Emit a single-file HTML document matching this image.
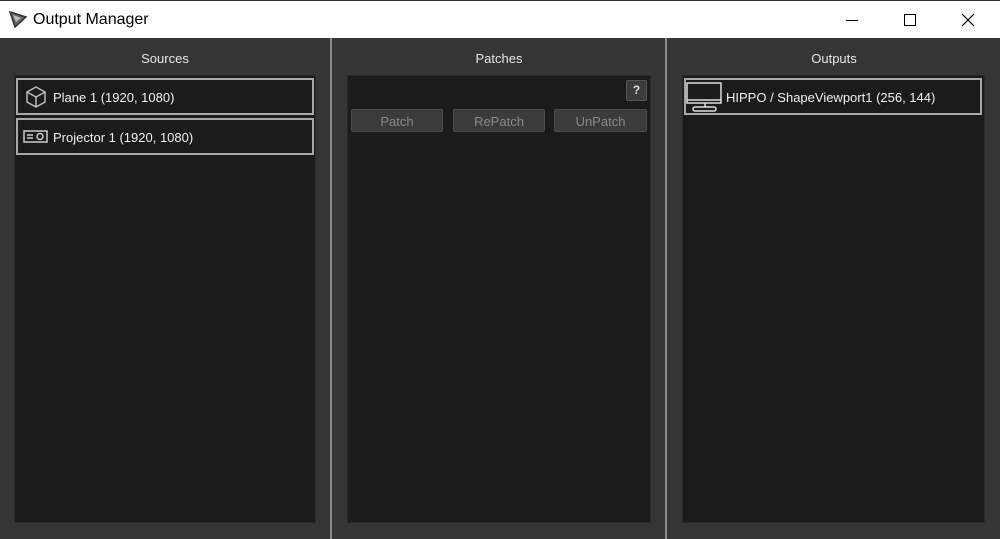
<!DOCTYPE html>
<html><head><style>
*{margin:0;padding:0;box-sizing:border-box}
body{width:1000px;height:539px;background:#353535;font-family:"Liberation Sans",sans-serif;position:relative;overflow:hidden}
.title{position:absolute;left:0;top:0;width:1000px;height:38px;background:#fff;border-top:1px solid #333}
.title span{position:absolute;left:33px;top:10px;font-size:16px;color:#000}
.sep{position:absolute;top:38px;width:2px;height:501px;background:#8a8a8a}
.hdr{position:absolute;top:51px;font-size:13px;color:#e6e6e6;text-align:center}
.list{position:absolute;top:75px;height:448px;background:#1b1b1b;border:1px solid #2a2a2a}
.item{position:absolute;height:37px;border:2px solid #a9a9a9;background:#1b1b1b;color:#f0f0f0;font-size:13px;line-height:35px}
.btn{position:absolute;top:109px;height:23px;background:#3b3b3b;border:1px solid #4a4a4a;border-radius:2px;color:#8a8a8a;font-size:13px;text-align:center;line-height:23px}
</style></head><body>
<div class="title">
<svg style="position:absolute;left:8px;top:9px" width="20" height="20" viewBox="0 0 20 20"><path d="M2 2 L18 7 L7 17 Z" fill="#666" stroke="#333" stroke-width="1.5"/><path d="M5 5 L13 8 L8 12 Z" fill="#bbb"/></svg>
<span>Output Manager</span>
<div style="position:absolute;left:846px;top:19px;width:12px;height:1px;background:#000"></div>
<div style="position:absolute;left:904px;top:13px;width:12px;height:12px;border:1px solid #000"></div>
<svg style="position:absolute;left:961px;top:12px" width="14" height="14"><path d="M1 1L13 13M13 1L1 13" stroke="#000" stroke-width="1.2"/></svg>
</div>
<div class="sep" style="left:330px"></div>
<div class="sep" style="left:665px"></div>
<div class="hdr" style="left:0;width:330px">Sources</div>
<div class="hdr" style="left:333px;width:332px">Patches</div>
<div class="hdr" style="left:668px;width:332px">Outputs</div>
<div class="list" style="left:14px;width:302px"></div>
<div class="list" style="left:347px;width:304px"></div>
<div class="list" style="left:682px;width:303px"></div>
<div class="item" style="left:16px;top:78px;width:298px">
<svg style="position:absolute;left:6px;top:5px" width="24" height="24" viewBox="0 0 24 24" fill="none" stroke="#bbb" stroke-width="1.5"><path d="M12 2L21 7V17L12 22L3 17V7Z M3 7L12 12L21 7 M12 12V22"/></svg>
<span style="position:absolute;left:35px">Plane 1 (1920, 1080)</span></div>
<div class="item" style="left:16px;top:118px;width:298px">
<svg style="position:absolute;left:5px;top:10px" width="26" height="14" viewBox="0 0 26 14" fill="none" stroke="#ccc" stroke-width="1.5"><rect x="1" y="1" width="23" height="11"/><circle cx="17" cy="6.5" r="3"/><path d="M4 5h6M4 8h6"/></svg>
<span style="position:absolute;left:35px">Projector 1 (1920, 1080)</span></div>
<div style="position:absolute;left:626px;top:80px;width:21px;height:21px;background:#3b3b3b;border:1px solid #555;border-radius:2px;color:#ddd;font-size:12px;text-align:center;line-height:19px;font-weight:bold">?</div>
<div class="btn" style="left:351px;width:92px">Patch</div>
<div class="btn" style="left:453px;width:92px">RePatch</div>
<div class="btn" style="left:554px;width:93px">UnPatch</div>
<div class="item" style="left:684px;top:78px;width:298px">
<svg style="position:absolute;left:0;top:2px" width="38" height="30" viewBox="0 0 38 30" fill="none" stroke="#ddd" stroke-width="1.5"><rect x="1" y="1" width="34" height="20"/><path d="M1 18h34"/><path d="M19 21v4"/><rect x="7" y="25" width="23" height="4" rx="2"/></svg>
<span style="position:absolute;left:40px">HIPPO / ShapeViewport1 (256, 144)</span></div>
</body></html>
